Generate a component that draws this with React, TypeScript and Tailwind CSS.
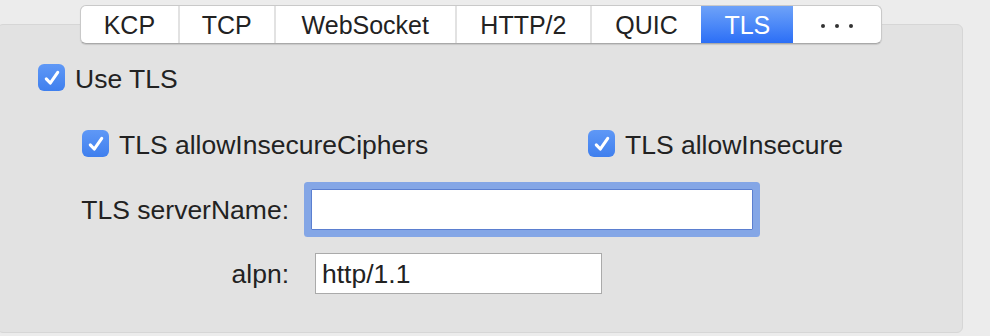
import React from "react";

const tabs = ["KCP", "TCP", "WebSocket", "HTTP/2", "QUIC", "TLS", "···"];
const tabWidths = ["w-[99px]", "w-[96px]", "w-[182px]", "w-[135px]", "w-[110px]", "w-[92px]", "w-[88px]"];

function Check({ label }: { label: string }) {
  return (
    <label className="flex items-center gap-[10px]">
      <span className="flex h-[27px] w-[27px] items-center justify-center rounded-[6px] bg-gradient-to-b from-[#5f98f6] to-[#3f7fee]">
        <svg viewBox="0 0 20 20" className="h-[22px] w-[22px]" fill="none">
          <path d="M4.8 10.8 L8.4 14.6 L15.2 4.8" stroke="white" strokeWidth="2.8" strokeLinecap="round" strokeLinejoin="round" />
        </svg>
      </span>
      <span className="h-[27px] pt-[4px] text-[26.5px] leading-[23px] text-[#222]">{label}</span>
    </label>
  );
}

export default function App() {
  const [active] = React.useState("TLS");

  return (
    <div className="h-[336px] w-[990px] overflow-hidden bg-[#ececec] pt-[5px] font-['Liberation_Sans',Arial,sans-serif]">
      {/* segmented control */}
      <div className="relative z-10 ml-[80px] flex h-[39px] w-[802px] overflow-hidden rounded-[6px] border border-[#c9c9c9] border-b-[#a9a9a9] bg-white shadow-[0_1px_1px_rgba(0,0,0,0.12)]">
        {tabs.map((t, i) => (
          <div
            key={t}
            className={`${tabWidths[i]} flex items-center justify-center pt-[2px] text-[25px] leading-none ${
              t === active
                ? "bg-gradient-to-b from-[#6ea2f8] to-[#2b6ef6] text-white"
                : "text-[#222]"
            } ${i < 4 ? "border-r-2 border-[#e2e2e2]" : ""}`}
          >
            {t === "···" ? (
              <span className="flex gap-[10px]">
                <span className="h-[4px] w-[4px] rounded-full bg-[#333]" />
                <span className="h-[4px] w-[4px] rounded-full bg-[#333]" />
                <span className="h-[4px] w-[4px] rounded-full bg-[#333]" />
              </span>
            ) : (
              t
            )}
          </div>
        ))}
      </div>

      {/* box */}
      <div className="-mt-[20px] -ml-[3px] h-[309px] w-[966px] rounded-[6px] border border-[#d6d6d6] bg-[#e2e2e2] pl-[40px] pt-[39px]">
        <Check label="Use TLS" />

        <div className="mt-[39px] flex pl-[44px]">
          <div className="w-[506px]">
            <Check label="TLS allowInsecureCiphers" />
          </div>
          <Check label="TLS allowInsecure" />
        </div>

        <div className="mt-[32px] flex items-center">
          <span className="w-[251px] pt-[2px] text-right text-[26.5px] leading-none text-[#222]">TLS serverName:</span>
          <div className="ml-[22px] h-[41px] w-[442px] rounded-[1px] border border-[#5b7fd0] bg-white shadow-[0_0_0_7px_#84a6e6]" />
        </div>

        <div className="mt-[23px] flex items-center">
          <span className="w-[251px] pt-[2px] text-right text-[26.5px] leading-none text-[#222]">alpn:</span>
          <div className="ml-[26px] flex h-[41px] w-[287px] items-center border border-[#aaaaaa] bg-white pl-[6px] pt-[2px] text-[26.5px] leading-none text-[#222]">
            http/1.1
          </div>
        </div>
      </div>
    </div>
  );
}
